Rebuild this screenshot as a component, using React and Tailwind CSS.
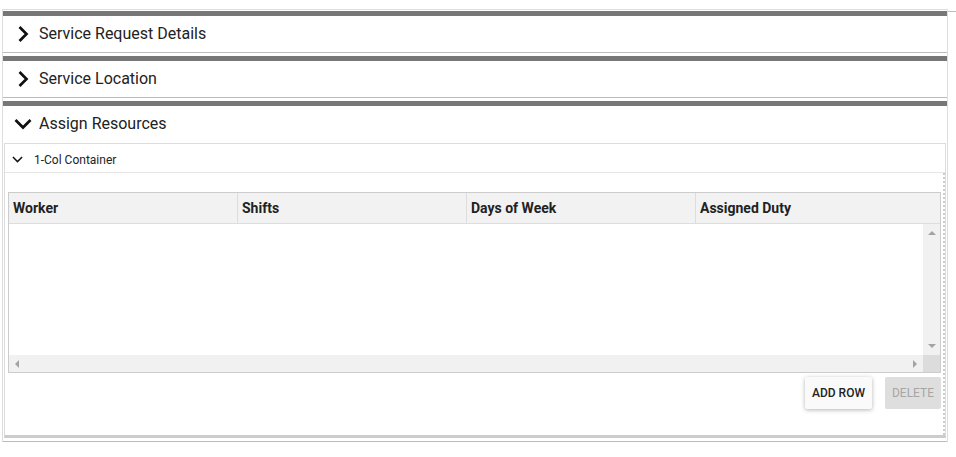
import React from 'react';

const ChevronRight = () => (
  <svg width="18" height="18" viewBox="0 0 18 18" className="shrink-0">
    <path d="M5.5 2 L12.5 9 L5.5 16" fill="none" stroke="#111" strokeWidth="2.7" />
  </svg>
);

const ChevronDown = ({ size = 18, w = 2.7 }) => (
  <svg width={size} height={size} viewBox="0 0 18 18" className="shrink-0">
    <path d="M1.5 5 L9 12.5 L16.5 5" fill="none" stroke="#111" strokeWidth={w} />
  </svg>
);

const Panel = ({ title, open, children }) => (
  <div className="border-t-[5px] border-t-[#777] border-b border-b-[#bbb] bg-white">
    <div className="h-[36px] flex items-center pl-[11px] gap-[7px]">
      {open ? <ChevronDown /> : <ChevronRight />}
      <span className="text-[16px] text-[#222]">{title}</span>
    </div>
    {children}
  </div>
);

const columns = ['Worker', 'Shifts', 'Days of Week', 'Assigned Duty'];

const Grid = () => (
  <div className="border border-[#ccc] w-[933px] bg-white">
    <div className="flex h-[31px] bg-[#f2f2f2] border-b border-[#ddd]">
      {columns.map((c, i) => (
        <div
          key={c}
          className={`w-[229px] flex items-center pl-[4px] text-[14px] font-bold text-[#222] ${i < 3 ? 'border-r border-[#ddd]' : ''}`}
        >
          {c}
        </div>
      ))}
      <div className="flex-1" />
    </div>
    <div className="flex h-[131px]">
      <div className="flex-1" />
      <div className="w-[17px] bg-[#f1f1f1] flex flex-col items-center justify-between py-[7px]">
        <div className="w-0 h-0 border-x-[4px] border-x-transparent border-b-[4px] border-b-[#a3a3a3]" />
        <div className="w-0 h-0 border-x-[4px] border-x-transparent border-t-[4px] border-t-[#a3a3a3]" />
      </div>
    </div>
    <div className="flex h-[17px] bg-[#f1f1f1]">
      <div className="flex-1 flex items-center justify-between px-[6px]">
        <div className="w-0 h-0 border-y-[4px] border-y-transparent border-r-[4px] border-r-[#a3a3a3]" />
        <div className="w-0 h-0 border-y-[4px] border-y-transparent border-l-[4px] border-l-[#a3a3a3]" />
      </div>
      <div className="w-[17px] bg-[#dcdcdc]" />
    </div>
  </div>
);

export default function App() {
  return (
    <div className="w-[956px] h-[457px] bg-white pt-[9px] pl-[2px] font-['Roboto','Liberation_Sans',sans-serif]">
      <div className="flex items-start">
        <div className="w-[946px] border-t border-x border-[#ddd] pt-[1px] flex flex-col gap-[3px]">
          <Panel title="Service Request Details" />
          <Panel title="Service Location" />
          <Panel title="Assign Resources" open>
            <div className="mx-[1px] mt-[1px] mb-[3px] border border-[#ddd] border-b-[3px] border-b-[#ccc]">
              <div className="h-[29px] flex items-center pt-[3px] pl-[7px] gap-[11px] border-b border-[#e6e6e6]">
                <ChevronDown size={11} w={2.4} />
                <span className="text-[12px] text-[#222]">1-Col Container</span>
              </div>
              <div className="border-r-[2px] border-dotted border-[#ccc] pl-[3px] pt-[19px] pb-[26px]">
                <Grid />
                <div className="flex justify-end gap-[13px] mt-[4px] w-[933px]">
                  <button className="w-[67px] h-[32px] bg-[#fafafa] rounded-[2px] shadow-[0_1px_4px_rgba(0,0,0,0.3)] text-[12px] font-medium text-[#222]">
                    ADD ROW
                  </button>
                  <button className="w-[56px] h-[32px] bg-[#dedede] rounded-[2px] text-[12px] font-normal text-[#a6a6a6]">
                    DELETE
                  </button>
                </div>
              </div>
            </div>
          </Panel>
        </div>
        <div className="w-[8px] h-px mt-[2px] bg-[#bbb]" />
      </div>
    </div>
  );
}
